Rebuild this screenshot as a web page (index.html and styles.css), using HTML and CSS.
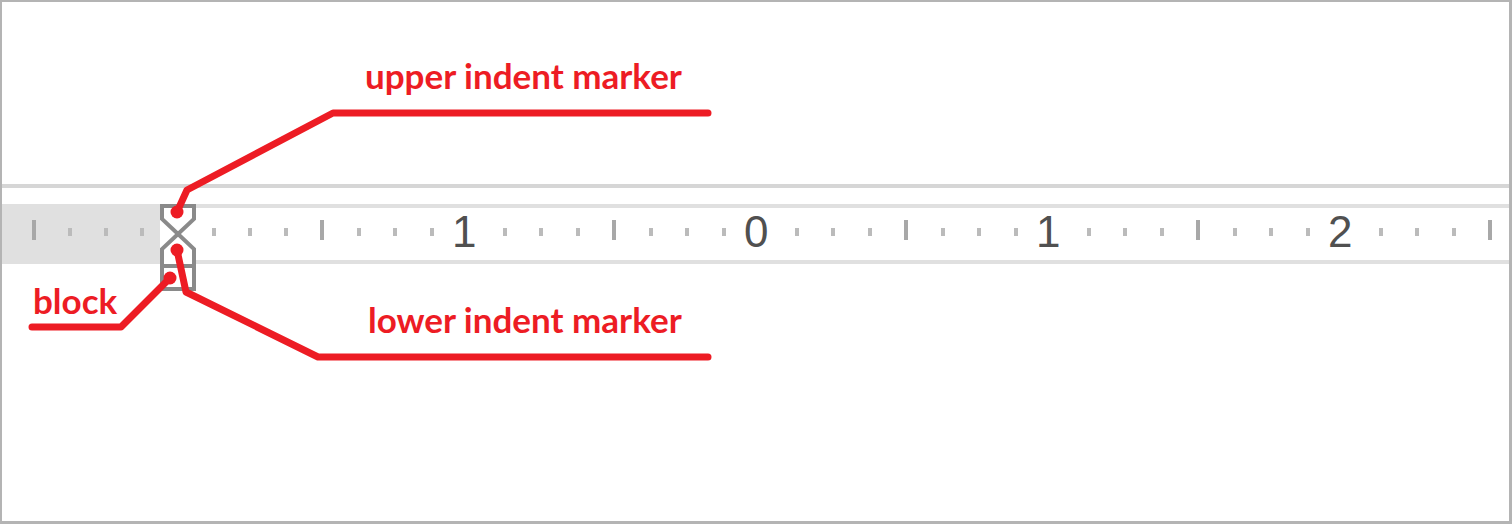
FILE: index.html
```html
<!DOCTYPE html>
<html>
<head>
<meta charset="utf-8">
<link rel="stylesheet" href="styles.css">
</head>
<body>
<div class="frame">
  <div class="rule-top"></div>
  <div class="ruler">
    <div class="ticks">
      <div class="c n36"><span class="big"></span></div>
      <div class="c n36"><span class="sm"></span></div>
      <div class="c n36"><span class="sm"></span></div>
      <div class="c n36"><span class="sm"></span></div>
      <div class="c n36"></div>
      <div class="c n36"><span class="sm"></span></div>
      <div class="c n36"><span class="sm"></span></div>
      <div class="c n36"><span class="sm"></span></div>

      <div class="c"><span class="big"></span></div>
      <div class="c"><span class="sm"></span></div>
      <div class="c"><span class="sm"></span></div>
      <div class="c"><span class="sm"></span></div>
      <div class="c"><span class="num">1</span></div>
      <div class="c"><span class="sm"></span></div>
      <div class="c"><span class="sm"></span></div>
      <div class="c"><span class="sm"></span></div>

      <div class="c"><span class="big"></span></div>
      <div class="c"><span class="sm"></span></div>
      <div class="c"><span class="sm"></span></div>
      <div class="c"><span class="sm"></span></div>
      <div class="c"><span class="num">0</span></div>
      <div class="c"><span class="sm"></span></div>
      <div class="c"><span class="sm"></span></div>
      <div class="c"><span class="sm"></span></div>

      <div class="c"><span class="big"></span></div>
      <div class="c"><span class="sm"></span></div>
      <div class="c"><span class="sm"></span></div>
      <div class="c"><span class="sm"></span></div>
      <div class="c"><span class="num">1</span></div>
      <div class="c"><span class="sm"></span></div>
      <div class="c"><span class="sm"></span></div>
      <div class="c"><span class="sm"></span></div>

      <div class="c"><span class="big"></span></div>
      <div class="c"><span class="sm"></span></div>
      <div class="c"><span class="sm"></span></div>
      <div class="c"><span class="sm"></span></div>
      <div class="c"><span class="num">2</span></div>
      <div class="c"><span class="sm"></span></div>
      <div class="c"><span class="sm"></span></div>
      <div class="c"><span class="sm"></span></div>

      <div class="c"><span class="big"></span></div>
    </div>
    <svg class="marker" width="36" height="88" viewBox="0 0 36 88">
      <path d="M2 2 H34 V15 L18 30 L2 15 Z" fill="#fff" stroke="#8a8a8a" stroke-width="4" stroke-linejoin="miter"/>
      <path d="M18 30 L34 45 V85 H2 V45 Z" fill="#fff" stroke="#8a8a8a" stroke-width="4" stroke-linejoin="miter"/>
      <path d="M2 62 H34" stroke="#8a8a8a" stroke-width="4"/>
    </svg>
  </div>

  <svg class="notes" width="1512" height="524" viewBox="0 0 1512 524">
    <g fill="none" stroke="#ed1c24" stroke-width="7" stroke-linecap="round" stroke-linejoin="round">
      <path d="M177 212 L187 190 L333 113 L708 113"/>
      <path d="M177 250 L186 292 L318 357 L708 357"/>
      <path d="M170 278 L121 327 L32 327"/>
    </g>
    <g fill="#ed1c24">
      <circle cx="177" cy="212" r="6.5"/>
      <circle cx="177" cy="250" r="6.5"/>
      <circle cx="170" cy="278" r="6.5"/>
    </g>
    <g class="label">
      <text x="365" y="89">upper indent marker</text>
      <text x="368" y="333">lower indent marker</text>
      <text x="33" y="314">block</text>
    </g>
  </svg>
</div>
</body>
</html>
```

FILE: styles.css
```css
html, body {
  margin: 0;
  padding: 0;
  background: #fff;
}

.frame {
  position: relative;
  box-sizing: border-box;
  width: 1512px;
  height: 524px;
  border-style: solid;
  border-color: #b4b4b4;
  border-width: 2px 3px 3px 2px;
  background: #fff;
  overflow: hidden;
}

.rule-top {
  margin-top: 182px;
  height: 4px;
  background: #d6d6d6;
}

.ruler {
  position: relative;
  margin-top: 16px;
  height: 52px;
  border-top: 4px solid #e0e0e0;
  border-bottom: 4px solid #e0e0e0;
  background: linear-gradient(to right, #e0e0e0 0, #e0e0e0 158px, #fff 158px);
}

.ticks {
  display: flex;
  height: 52px;
  padding-left: 14px;
}

.c {
  flex: 0 0 36.5px;
  width: 36.5px;
  display: flex;
  align-items: center;
  justify-content: center;
  padding-bottom: 4px;
  box-sizing: border-box;
}

.c.n36 {
  flex-basis: 36px;
  width: 36px;
}

.sm {
  display: block;
  width: 4px;
  height: 8px;
  background: #bbbbbb;
}

.big {
  display: block;
  width: 4px;
  height: 20px;
  margin-bottom: 4px;
  background: #a8a8a8;
}

.num {
  display: block;
  font-family: "Liberation Sans", Arial, sans-serif;
  font-size: 44px;
  line-height: 44px;
  color: #505050;
  margin-right: 8px;
}

.marker {
  position: absolute;
  left: 158px;
  top: -4px;
  display: block;
}

.notes {
  position: absolute;
  left: -2px;
  top: -2px;
  pointer-events: none;
}

.label text {
  font-family: Lato, "Open Sans", sans-serif;
  font-weight: 700;
  font-size: 35px;
  fill: #ed1c24;
}
```
